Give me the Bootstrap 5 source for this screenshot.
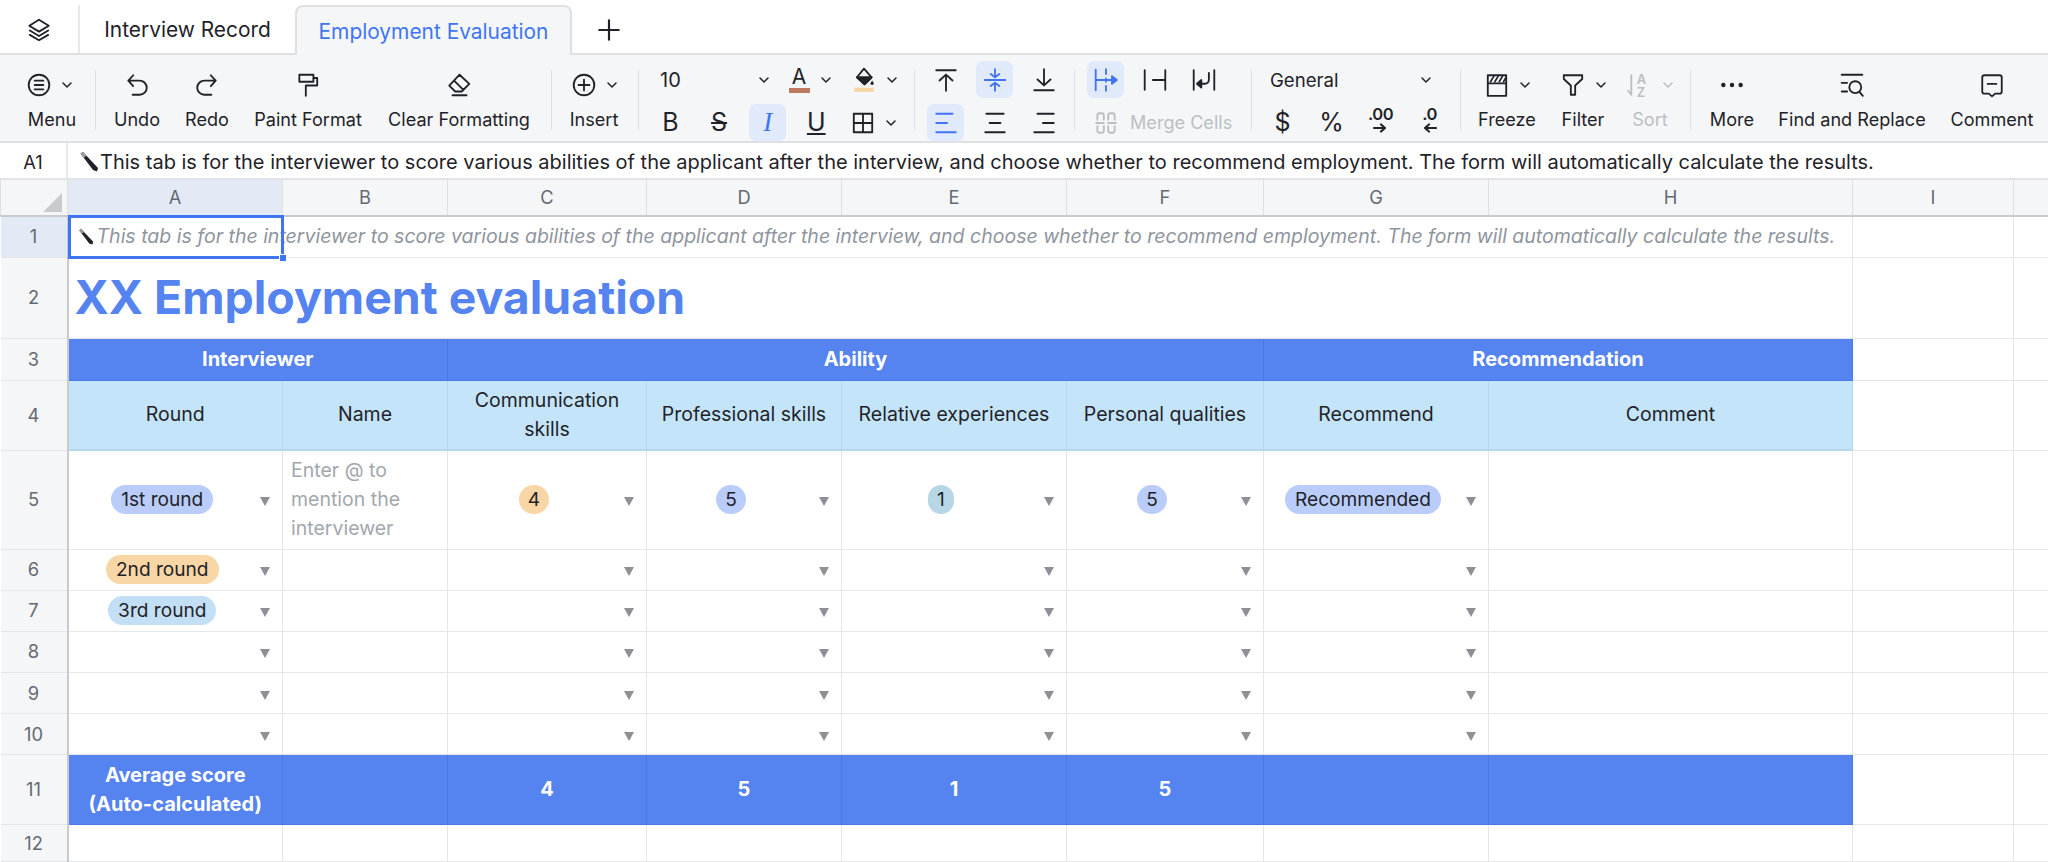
<!DOCTYPE html>
<html lang="en"><head><meta charset="utf-8"><title>Employment Evaluation</title>
<link href="https://cdn.jsdelivr.net/npm/bootstrap@5.3.0/dist/css/bootstrap.min.css" rel="stylesheet">
<style>
html,body{height:862px;overflow:hidden;background:#fff}
body{font-family:Inter,"Liberation Sans",sans-serif;color:#1f2329;font-size:19.5px}
svg{display:block;flex:none}
.ic{width:26px;height:26px;fill:none;stroke:currentColor;stroke-width:1.7;stroke-linecap:round;stroke-linejoin:round}
.cv{width:12px;height:12px;fill:none;stroke:currentColor;stroke-width:1.5;stroke-linecap:round;stroke-linejoin:round}
.tabbar{height:55px;border-bottom:0;position:relative;--bs-nav-tabs-border-width:0;flex-wrap:nowrap}
.tabbar::after{content:"";position:absolute;left:0;right:0;bottom:0;border-bottom:2px solid #dee0e3}
.tab-logo{width:80px;height:50px;margin-top:5px;border-right:2px solid #e8e9eb;color:#1f2329}
.tabbar .nav-link{font-size:20.9px;padding:0;height:50px;margin-top:5px;color:#1f2329;border:0;line-height:50px;background:#fff}
.tab-one{width:215px;text-align:center}
.tabbar .nav-link.active{width:277px;text-align:center;color:#3f75f2;background:#f5f6f7;border:2px solid #dee0e3;border-bottom:0;border-radius:8px 8px 0 0;position:relative;z-index:1;line-height:50px;height:50px}
.tab-add{width:74px;height:50px;margin-top:5px}
.toolbar{height:88px;background:#f5f6f7;border-bottom:2px solid #dee0e3;padding-top:6px;font-size:18.1px}
.tool{flex:none;padding-top:10px;display:flex;flex-direction:column;align-items:center}
.tool-ic{height:28px;display:flex;align-items:center;gap:9px}
.tool-lb{height:26px;line-height:26px;margin-top:7px;white-space:nowrap}
.tsep{flex:none;width:1px;height:60px;margin-top:9px;background:#dee0e3}
.w-menu{margin-left:9px;width:86px}.w-menu .tool-ic{padding-right:5px}
.w-undo{width:82px}.w-redo{width:58px}.w-paint{width:144px}.w-clear{width:158px;margin-right:13px}
.w-insert{width:84px;margin-right:2px}
.blk{flex:none;display:flex;flex-direction:column;gap:6px}
.blk-fmt{margin-left:13px;width:262px}
.blk-al{margin-left:12px;width:147px}
.blk-ov{margin-left:12px;width:164px}
.blk-num{margin-left:12px;width:196px}
.brow{display:flex;align-items:center;height:37px;gap:12px}
.tbtn{width:37px;height:37px;padding:0;border:0;border-radius:7px;display:flex;align-items:center;justify-content:center;color:#1f2329;flex:none;font-size:25px;line-height:1}
.tbtn.on{background:#e1eafb;color:#3f75f2}
.tbtn.on:hover,.tbtn.on:active{background:#e1eafb;color:#3f75f2}
.fmt-gap{gap:11.6px}
.fsz{width:118px;display:flex;align-items:center;justify-content:space-between;padding-left:8px;padding-right:0;font-size:20px}
.colorbtn{width:26px;display:flex;flex-direction:column;align-items:center;line-height:1;flex:none}
.colorA{font-size:21px;line-height:21px;font-weight:400}
.bar{display:block;width:21px;height:5px;margin-top:1px}
.bar-a{background:#be7a5e}
.mini{display:flex;align-items:center;gap:8px;flex:none}
.m-a{margin-left:4px}
.m-f{margin-left:6.5px;gap:9px}
.m-g{margin-left:4px;gap:9px}
.gene{width:168px;display:flex;align-items:center;justify-content:space-between;padding-left:6px;font-size:18.6px;padding-top:2px}
.disabled-t{color:#bbbfc4}
.merge-t{font-size:18.1px;margin-left:-6px;white-space:nowrap;color:#bbbfc4}
.dec{font-size:16.5px;font-weight:600;letter-spacing:-.5px;position:relative;top:-5px}
.decw{display:flex;flex-direction:column;align-items:center;line-height:1}
.decw svg{margin-top:-6px}
.w-frz{width:92px}.w-flt{width:60px}.w-srt{width:74px;margin-right:3px}.w-more{width:82px}.w-find{width:158px}.w-cmt{width:117px;padding-left:5px}
.fbar{height:37px;border-bottom:2px solid #e2e3e6;font-size:20px;white-space:nowrap;overflow:hidden}
.fref{width:68px;height:100%;text-align:center;line-height:39px;border-right:2px solid #e8e9eb;flex:none;font-size:18.3px}
.ftext{padding-left:11px;line-height:35px;padding-top:3px;display:flex;align-items:center;gap:1px}
table.sheet{table-layout:fixed;width:2048px;margin:0;border-collapse:collapse;color:#1f2329}
.sheet th,.sheet td{padding:0;border:1px solid #e4e6e9;font-weight:400;vertical-align:middle;text-align:center;font-size:19.5px;line-height:29px;box-shadow:none;background:#fff}
.sheet thead th{height:36px;background:#f5f6f7;color:#646a73;border-color:#dee0e3;border-top:0;border-bottom:2.5px solid #c8cacd;font-size:18.3px}
.sheet thead th.csel{background:#e3e9f5}
.sheet thead th.corner{position:relative}
.corner-t{position:absolute;right:5px;bottom:3px;width:0;height:0;border-style:solid;border-width:0 0 19px 19px;border-color:transparent transparent #c8cacd transparent}
.sheet tbody th{background:#f5f6f7;color:#646a73;border-right:2px solid #c8cacd;border-left:0;font-size:18.3px}
.sheet tbody th.rsel{background:#e3e9f5}
.r1{height:41px}.r2{height:81px}.r3{height:42px}.r4{height:70px}.r5{height:99px}.rn{height:41.2px}.r11{height:70px}.r12{height:37px}
.sheet td.note{position:relative;text-align:left;white-space:nowrap;overflow:visible;color:#8f959e;font-style:italic;padding-left:9px;border-right:0}
.note-in{display:flex;align-items:center;gap:3px}
.selbox{position:absolute;left:-1px;top:-2px;width:216px;height:44px;border:3px solid #3f75f2;pointer-events:none}
.selbox::after{content:"";position:absolute;right:-6px;bottom:-6px;width:8px;height:8px;background:#3f75f2;border:1px solid #fff}
.sheet td.ttl{text-align:left;padding-left:6px;color:#5583f0;font-weight:700;font-size:46.4px;line-height:1.2;white-space:nowrap}
.sheet td.hb{background:#5583ef;color:#fff;font-weight:700;font-size:20px;border-color:#4a78e6}
.sheet td.hl{background:#c4e5f9;border-color:#b4d8ee;border-bottom:2px solid #b5d9ea}
.sheet td.ph{text-align:left;padding-left:8px;color:#a2a7ae}
.dd{display:flex;align-items:center;padding-right:12px}
.dd-c{flex:1;margin-right:4px;text-align:center;min-height:29px}
.dd-t{width:0;height:0;flex:none;border-style:solid;border-width:9px 5.5px 0 5.5px;border-color:#8f9095 transparent transparent transparent;margin-top:4px}
.chip{display:inline-block;font-weight:400;font-size:19.1px;line-height:29px;padding:0 10px;border-radius:15px;color:#1f2329;height:29px;vertical-align:top}
.c-b{background:#bacdfa}.c-o{background:#f8d6a5}.c-l{background:#c3dff5}.c-t{background:#b7d6e6}
.c-n{padding:0 9px}
</style></head><body>
<div class="d-flex flex-column">
<ul class="nav nav-tabs tabbar">
 <li class="nav-item"><div class="tab-logo d-flex align-items-center justify-content-center"><svg class="ic" viewBox="0 0 24 24"><path d="M12 2.500 21 8l-9 5.500L3 8zM3.500 12.500l8.500 5 8.500-5M3.500 16.500l8.500 5 8.500-5"/></svg></div></li>
 <li class="nav-item"><a class="nav-link tab-one" href="#">Interview Record</a></li>
 <li class="nav-item"><a class="nav-link active" href="#">Employment Evaluation</a></li>
 <li class="nav-item"><div class="tab-add d-flex align-items-center justify-content-center"><svg class="ic" viewBox="0 0 24 24" style="stroke-width:2"><path d="M12 3v18M3 12h18"/></svg></div></li>
</ul>
<div class="toolbar d-flex align-items-start">
 <div class="tool w-menu"><div class="tool-ic"><svg class="ic" viewBox="0 0 24 24"><circle cx="12" cy="12" r="9.500"/><path d="M8 8h8M8 12h8M8 16h8"/></svg><svg class="cv" viewBox="0 0 12 12"><path d="M2 4l4 4 4-4"/></svg></div><div class="tool-lb">Menu</div></div>
 <div class="tsep"></div>
 <div class="tool w-undo"><div class="tool-ic"><svg class="ic" viewBox="0 0 24 24"><path d="M8.500 3 4 8l4.500 5M4 8h10.500a6 6 0 0 1 0 13H8"/></svg></div><div class="tool-lb">Undo</div></div>
 <div class="tool w-redo"><div class="tool-ic"><svg class="ic" viewBox="0 0 24 24"><path d="M15.500 3 20 8l-4.500 5M20 8H9.500a6 6 0 0 0 0 13H16"/></svg></div><div class="tool-lb">Redo</div></div>
 <div class="tool w-paint"><div class="tool-ic"><svg class="ic" viewBox="0 0 24 24"><path d="M4 2.500h13v6.500H4zM17 5.500h3.500v7H10V22"/></svg></div><div class="tool-lb">Paint Format</div></div>
 <div class="tool w-clear"><div class="tool-ic"><svg class="ic" viewBox="0 0 24 24"><path d="M12.500 2.500 21.500 11l-7 7H8.500L3 12.500zM7.500 8l8.500 8.500M6 21.500h13"/></svg></div><div class="tool-lb">Clear Formatting</div></div>
 <div class="tsep"></div>
 <div class="tool w-insert"><div class="tool-ic"><svg class="ic" viewBox="0 0 24 24"><circle cx="12" cy="12" r="9.500"/><path d="M12 7v10M7 12h10"/></svg><svg class="cv" viewBox="0 0 12 12"><path d="M2 4l4 4 4-4"/></svg></div><div class="tool-lb">Insert</div></div>
 <div class="tsep"></div>
 <div class="blk blk-fmt">
  <div class="brow">
   <div class="fsz"><span>10</span><svg class="cv" viewBox="0 0 12 12"><path d="M2 4l4 4 4-4"/></svg></div>
   <div class="mini m-a"><div class="colorbtn"><span class="colorA">A</span><span class="bar bar-a"></span></div><svg class="cv" viewBox="0 0 12 12"><path d="M2 4l4 4 4-4"/></svg></div>
   <div class="mini m-f"><svg class="ic" viewBox="0 0 24 24"><path d="M12 1.500l7 8-6.500 6.500L5.500 9.500z"/><path d="M5.500 9.500h13.500l-6.500 6.500z" fill="#1f2329"/><path d="M19.500 12.500l1.500 2.500a1.500 1.500 0 0 1-3 0z" fill="#1f2329" stroke="none"/><path d="M3 21h18" stroke="#f8d6a4" stroke-width="4" stroke-linecap="butt"/></svg><svg class="cv" viewBox="0 0 12 12"><path d="M2 4l4 4 4-4"/></svg></div>
  </div>
  <div class="brow fmt-gap">
   <button class="btn tbtn" type="button">B</button>
   <button class="btn tbtn text-decoration-line-through" type="button">S</button>
   <button class="btn tbtn on fst-italic" type="button"><span style="font-family:'Liberation Serif',serif;font-size:27px">I</span></button>
   <button class="btn tbtn text-decoration-underline" type="button">U</button>
   <div class="mini m-g"><svg class="ic" viewBox="0 0 24 24"><path d="M3.500 3.500h17v17h-17zM12 3.500v17M3.500 12h17"/></svg><svg class="cv" viewBox="0 0 12 12"><path d="M2 4l4 4 4-4"/></svg></div>
  </div>
 </div>
 <div class="tsep"></div>
 <div class="blk blk-al">
  <div class="brow">
   <button class="btn tbtn" type="button"><svg class="ic" viewBox="0 0 24 24"><path d="M3 3h18M12 22V7M6 12.500 12 7l6 5.500"/></svg></button>
   <button class="btn tbtn on" type="button"><svg class="ic" viewBox="0 0 24 24"><path d="M2.500 12h19M12 2v7.500M8 6.500l4 3 4-3M12 22v-7.500M8 17.500l4-3 4 3"/></svg></button>
   <button class="btn tbtn" type="button"><svg class="ic" viewBox="0 0 24 24"><path d="M3 21.500h18M12 2v15M6 11.500l6 5.500 6-5.500"/></svg></button>
  </div>
  <div class="brow">
   <button class="btn tbtn on" type="button"><svg class="ic" viewBox="0 0 24 24"><path d="M3 3.500h15M3 12h10M3 20.500h18"/></svg></button>
   <button class="btn tbtn" type="button"><svg class="ic" viewBox="0 0 24 24"><path d="M4 3.500h16M7 12h10M3 20.500h18"/></svg></button>
   <button class="btn tbtn" type="button"><svg class="ic" viewBox="0 0 24 24"><path d="M6 3.500h15M11 12h10M3 20.500h18"/></svg></button>
  </div>
 </div>
 <div class="tsep"></div>
 <div class="blk blk-ov">
  <div class="brow">
   <button class="btn tbtn on" type="button"><svg class="ic" viewBox="0 0 24 24"><path d="M2.500 2.500v19M12 2v4.500M12 10.500v3M12 17.500V22M2.500 12h17"/><path d="M17.500 8.500 22 12l-4.500 3.500z" fill="currentColor"/></svg></button>
   <button class="btn tbtn" type="button"><svg class="ic" viewBox="0 0 24 24"><path d="M2.500 3v18M21.500 3v18M10 12h11.500"/></svg></button>
   <button class="btn tbtn" type="button"><svg class="ic" viewBox="0 0 24 24"><path d="M2.500 3v18M21.500 3v18M16.500 5.500V12a3.500 3.500 0 0 1-3.500 3.500H9"/><path d="M9.500 12v7L5.500 15.500z" fill="currentColor"/></svg></button>
  </div>
  <div class="brow">
   <button class="btn tbtn disabled-t" type="button"><svg class="ic" viewBox="0 0 24 24"><path d="M4 9V5a2 2 0 0 1 2-2h2a2 2 0 0 1 2 2v4M14 9V5a2 2 0 0 1 2-2h2a2 2 0 0 1 2 2v4M4 15v4a2 2 0 0 0 2 2h2a2 2 0 0 0 2-2v-4M14 15v4a2 2 0 0 0 2 2h2a2 2 0 0 0 2-2v-4M3 12h7M14 12h7"/></svg></button>
   <span class="merge-t">Merge Cells</span>
  </div>
 </div>
 <div class="tsep"></div>
 <div class="blk blk-num">
  <div class="brow"><div class="gene"><span>General</span><svg class="cv" viewBox="0 0 12 12"><path d="M2 4l4 4 4-4"/></svg></div></div>
  <div class="brow">
   <button class="btn tbtn" type="button">$</button>
   <button class="btn tbtn" type="button">%</button>
   <button class="btn tbtn" type="button"><span class="decw"><span class="dec">.00</span><svg class="cv" viewBox="0 0 12 12" style="width:18px;height:12px;stroke-width:2.200"><path d="M0 6h11M7 2.500 11 6l-4 3.500"/></svg></span></button>
   <button class="btn tbtn" type="button"><span class="decw"><span class="dec">.0</span><svg class="cv" viewBox="0 0 12 12" style="width:18px;height:12px;stroke-width:2.200"><path d="M12 6H1M5 2.500 1 6l4 3.500"/></svg></span></button>
  </div>
 </div>
 <div class="tsep"></div>
 <div class="tool w-frz"><div class="tool-ic"><svg class="ic" viewBox="0 0 24 24"><path d="M3.500 3h17v19h-17zM3.500 10.500h17"/><path d="M6 9l3-5M10 9l3-5M14 9l3-5M18 9l2-3.500" stroke-width="1.500"/></svg><svg class="cv" viewBox="0 0 12 12"><path d="M2 4l4 4 4-4"/></svg></div><div class="tool-lb">Freeze</div></div>
 <div class="tool w-flt"><div class="tool-ic"><svg class="ic" viewBox="0 0 24 24"><path d="M3.500 3h17v3.500l-6.500 6V21h-4v-8.500l-6.500-6z"/></svg><svg class="cv" viewBox="0 0 12 12"><path d="M2 4l4 4 4-4"/></svg></div><div class="tool-lb">Filter</div></div>
 <div class="tool w-srt disabled-t"><div class="tool-ic"><svg class="ic" viewBox="0 0 24 24"><path d="M4 3v18M1 17.500 4 21"/><text x="9" y="11" font-size="12" font-family="Inter,sans-serif" font-weight="600" fill="currentColor" stroke="none">A</text><text x="9" y="23" font-size="12" font-family="Inter,sans-serif" font-weight="600" fill="currentColor" stroke="none">Z</text></svg><svg class="cv" viewBox="0 0 12 12"><path d="M2 4l4 4 4-4"/></svg></div><div class="tool-lb">Sort</div></div>
 <div class="tsep"></div>
 <div class="tool w-more"><div class="tool-ic"><svg class="ic" viewBox="0 0 24 24"><circle cx="4" cy="12" r="1.200" fill="currentColor"/><circle cx="12" cy="12" r="1.200" fill="currentColor"/><circle cx="20" cy="12" r="1.200" fill="currentColor"/></svg></div><div class="tool-lb">More</div></div>
 <div class="tool w-find"><div class="tool-ic"><svg class="ic" viewBox="0 0 24 24"><path d="M2.500 2.500h19M2.500 10h5M2.500 18h5"/><circle cx="15" cy="14" r="5.500"/><path d="M19 18.500l3 3.500"/></svg></div><div class="tool-lb">Find and Replace</div></div>
 <div class="tool w-cmt"><div class="tool-ic"><svg class="ic" viewBox="0 0 24 24"><path d="M5 3h14a2 2 0 0 1 2 2v13a2 2 0 0 1-2 2h-4l-3 2.500L9 20H5a2 2 0 0 1-2-2V5a2 2 0 0 1 2-2zM8 11h8"/></svg></div><div class="tool-lb">Comment</div></div>
</div>
<div class="fbar d-flex">
 <div class="fref">A1</div>
 <div class="ftext"><svg width="20" height="20" viewBox="0 0 20 20"><path d="M1.500 1.500 4 0l15 16-1 3.500L14 18z" fill="#1f2329"/><path d="M1.500 1.500 4 0l3.500 3.700-3 2.300z" fill="#9a9ea5"/></svg><span>This tab is for the interviewer to score various abilities of the applicant after the interview, and choose whether to recommend employment. The form will automatically calculate the results.</span></div>
</div>
<table class="table sheet">
 <colgroup><col style="width:67px"><col style="width:215px"><col style="width:165px"><col style="width:199px"><col style="width:195px"><col style="width:225px"><col style="width:197px"><col style="width:225px"><col style="width:364px"><col style="width:161px"><col style="width:35px"></colgroup>
 <thead><tr><th class="corner"><span class="corner-t"></span></th><th class="csel">A</th><th>B</th><th>C</th><th>D</th><th>E</th><th>F</th><th>G</th><th>H</th><th>I</th><th></th></tr></thead>
 <tbody>
 <tr class="r1"><th class="rsel">1</th><td class="note" colspan="8"><span class="selbox"></span><div class="note-in"><svg width="16" height="18" viewBox="0 0 20 20"><path d="M1.500 1.500 4 0l15 16-1 3.500L14 18z" fill="#1f2329"/><path d="M1.500 1.500 4 0l3.500 3.700-3 2.300z" fill="#9a9ea5"/></svg><span>This tab is for the interviewer to score various abilities of the applicant after the interview, and choose whether to recommend employment. The form will automatically calculate the results.</span></div></td><td></td><td></td></tr>
 <tr class="r2"><th>2</th><td class="ttl" colspan="8">XX Employment evaluation</td><td></td><td></td></tr>
 <tr class="r3"><th>3</th><td class="hb" colspan="2">Interviewer</td><td class="hb" colspan="4">Ability</td><td class="hb" colspan="2">Recommendation</td><td></td><td></td></tr>
 <tr class="r4"><th>4</th><td class="hl">Round</td><td class="hl">Name</td><td class="hl">Communication<br>skills</td><td class="hl">Professional skills</td><td class="hl">Relative experiences</td><td class="hl">Personal qualities</td><td class="hl">Recommend</td><td class="hl">Comment</td><td></td><td></td></tr>
 <tr class="r5"><th>5</th><td><div class="dd"><div class="dd-c"><span class="chip badge c-b">1st round</span></div><span class="dd-t"></span></div></td><td class="ph">Enter @ to<br>mention the<br>interviewer</td><td><div class="dd"><div class="dd-c"><span class="chip badge c-o c-n">4</span></div><span class="dd-t"></span></div></td><td><div class="dd"><div class="dd-c"><span class="chip badge c-b c-n">5</span></div><span class="dd-t"></span></div></td><td><div class="dd"><div class="dd-c"><span class="chip badge c-t c-n">1</span></div><span class="dd-t"></span></div></td><td><div class="dd"><div class="dd-c"><span class="chip badge c-b c-n">5</span></div><span class="dd-t"></span></div></td><td><div class="dd"><div class="dd-c"><span class="chip badge c-b">Recommended</span></div><span class="dd-t"></span></div></td><td></td><td></td><td></td></tr>
 <tr class="rn"><th>6</th><td><div class="dd"><div class="dd-c"><span class="chip badge c-o">2nd round</span></div><span class="dd-t"></span></div></td><td></td><td><div class="dd"><div class="dd-c"></div><span class="dd-t"></span></div></td><td><div class="dd"><div class="dd-c"></div><span class="dd-t"></span></div></td><td><div class="dd"><div class="dd-c"></div><span class="dd-t"></span></div></td><td><div class="dd"><div class="dd-c"></div><span class="dd-t"></span></div></td><td><div class="dd"><div class="dd-c"></div><span class="dd-t"></span></div></td><td></td><td></td><td></td></tr>
 <tr class="rn"><th>7</th><td><div class="dd"><div class="dd-c"><span class="chip badge c-l">3rd round</span></div><span class="dd-t"></span></div></td><td></td><td><div class="dd"><div class="dd-c"></div><span class="dd-t"></span></div></td><td><div class="dd"><div class="dd-c"></div><span class="dd-t"></span></div></td><td><div class="dd"><div class="dd-c"></div><span class="dd-t"></span></div></td><td><div class="dd"><div class="dd-c"></div><span class="dd-t"></span></div></td><td><div class="dd"><div class="dd-c"></div><span class="dd-t"></span></div></td><td></td><td></td><td></td></tr>
 <tr class="rn"><th>8</th><td><div class="dd"><div class="dd-c"></div><span class="dd-t"></span></div></td><td></td><td><div class="dd"><div class="dd-c"></div><span class="dd-t"></span></div></td><td><div class="dd"><div class="dd-c"></div><span class="dd-t"></span></div></td><td><div class="dd"><div class="dd-c"></div><span class="dd-t"></span></div></td><td><div class="dd"><div class="dd-c"></div><span class="dd-t"></span></div></td><td><div class="dd"><div class="dd-c"></div><span class="dd-t"></span></div></td><td></td><td></td><td></td></tr>
 <tr class="rn"><th>9</th><td><div class="dd"><div class="dd-c"></div><span class="dd-t"></span></div></td><td></td><td><div class="dd"><div class="dd-c"></div><span class="dd-t"></span></div></td><td><div class="dd"><div class="dd-c"></div><span class="dd-t"></span></div></td><td><div class="dd"><div class="dd-c"></div><span class="dd-t"></span></div></td><td><div class="dd"><div class="dd-c"></div><span class="dd-t"></span></div></td><td><div class="dd"><div class="dd-c"></div><span class="dd-t"></span></div></td><td></td><td></td><td></td></tr>
 <tr class="rn"><th>10</th><td><div class="dd"><div class="dd-c"></div><span class="dd-t"></span></div></td><td></td><td><div class="dd"><div class="dd-c"></div><span class="dd-t"></span></div></td><td><div class="dd"><div class="dd-c"></div><span class="dd-t"></span></div></td><td><div class="dd"><div class="dd-c"></div><span class="dd-t"></span></div></td><td><div class="dd"><div class="dd-c"></div><span class="dd-t"></span></div></td><td><div class="dd"><div class="dd-c"></div><span class="dd-t"></span></div></td><td></td><td></td><td></td></tr>
 <tr class="r11"><th>11</th><td class="hb">Average score<br>(Auto-calculated)</td><td class="hb"></td><td class="hb">4</td><td class="hb">5</td><td class="hb">1</td><td class="hb">5</td><td class="hb"></td><td class="hb"></td><td></td><td></td></tr>
 <tr class="r12"><th>12</th><td></td><td></td><td></td><td></td><td></td><td></td><td></td><td></td><td></td><td></td></tr>
 </tbody>
</table>
</div>
</body></html>
